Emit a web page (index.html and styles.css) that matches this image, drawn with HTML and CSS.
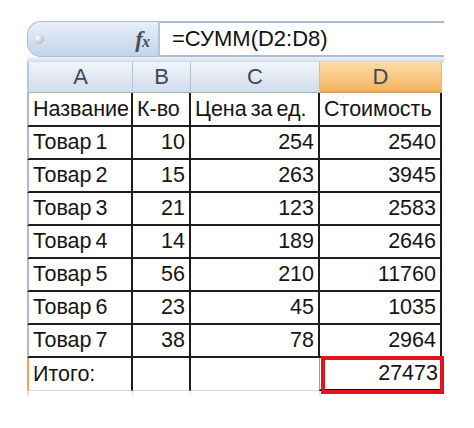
FILE: index.html
```html
<!DOCTYPE html>
<html lang="ru">
<head>
<meta charset="utf-8">
<link rel="stylesheet" href="styles.css">
</head>
<body>
<div class="sheet">
  <div class="fbar">
    <div class="fbar-left">
      <span class="knob"></span>
      <span class="fx">f<i>x</i></span>
    </div>
    <div class="fbar-input">=СУММ(D2:D8)</div>
  </div>
  <div class="strip"></div>
  <div class="grid">
    <div class="hd first">A</div>
    <div class="hd">B</div>
    <div class="hd">C</div>
    <div class="hd sel">D</div>

    <div class="c l first">Название</div><div class="c l">К-во</div><div class="c l">Цена за ед.</div><div class="c l">Стоимость</div>
    <div class="c l first">Товар 1</div><div class="c r">10</div><div class="c r">254</div><div class="c r">2540</div>
    <div class="c l first">Товар 2</div><div class="c r">15</div><div class="c r">263</div><div class="c r">3945</div>
    <div class="c l first">Товар 3</div><div class="c r">21</div><div class="c r">123</div><div class="c r">2583</div>
    <div class="c l first">Товар 4</div><div class="c r">14</div><div class="c r">189</div><div class="c r">2646</div>
    <div class="c l first">Товар 5</div><div class="c r">56</div><div class="c r">210</div><div class="c r">11760</div>
    <div class="c l first">Товар 6</div><div class="c r">23</div><div class="c r">45</div><div class="c r">1035</div>
    <div class="c l first">Товар 7</div><div class="c r">38</div><div class="c r">78</div><div class="c r">2964</div>
    <div class="c l first tot">Итого:</div><div class="c tot-b"></div><div class="c tot-c"></div><div class="c r tot-d"><span>27473</span></div>
  </div>
  <div class="tail">
    <div class="t first"></div><div class="t"></div><div class="t"></div><div class="t"></div>
  </div>
</div>
</body>
</html>
```
FILE: styles.css
```css
html, body {
  margin: 0;
  padding: 0;
  background: #fff;
}
body {
  font-family: "Liberation Sans", Arial, sans-serif;
  color: #151515;
}
.sheet {
  padding: 21px 0 0 27px;
  width: 417px;
}
.fbar {
  display: flex;
  height: 36px;
}
.fbar-left {
  width: 133px;
  box-sizing: border-box;
  display: flex;
  align-items: center;
  justify-content: space-between;
  padding: 0 9px 0 6px;
  border-radius: 14px 0 0 14px;
  background: linear-gradient(#e9f0f8, #d3e0ef 55%, #c3d3e8);
  border: 1px solid #a9bdd6;
  border-right: 2px solid #b3c5dc;
}
.knob {
  width: 10px;
  height: 10px;
  border-radius: 50%;
  background: radial-gradient(circle at 35% 35%, #ffffff, #b9bec6 70%, #9aa2ad);
}
.fx {
  font-family: "Liberation Serif", "Times New Roman", serif;
  font-style: italic;
  font-weight: bold;
  font-size: 23px;
  color: #4b4f57;
  letter-spacing: -1px;
  line-height: 1;
}
.fx i {
  font-size: 16px;
}
.fbar-input {
  flex: 1;
  box-sizing: border-box;
  border-top: 2px solid #a9bcd4;
  border-bottom: 2px solid #a9bcd4;
  padding-left: 12px;
  font-size: 22px;
  line-height: 32px;
  color: #111;
}
.strip {
  height: 5px;
  background: linear-gradient(#eef3f9, #cfdcec);
}
.grid {
  display: grid;
  grid-template-columns: 106px 58px 129px 122px;
  grid-template-rows: 31px 34px repeat(8, 33px);
}
.hd {
  display: flex;
  align-items: center;
  justify-content: center;
  font-size: 22px;
  color: #3c4858;
  background: linear-gradient(#f1f5fb, #dde6f1 60%, #d2deec);
  border-right: 1px solid #b2c1d4;
  border-bottom: 1px solid #9fb2c9;
}
.hd.first {
  border-left: 2px solid #b8c8dc;
}
.hd.sel {
  background: linear-gradient(#fbdca6, #f8c67f 60%, #f3b25f);
  color: #3c4a5a;
  border-bottom: 2px solid #e9a54d;
}
.c {
  box-sizing: border-box;
  display: flex;
  align-items: center;
  font-size: 21.5px;
  padding: 0 4px;
  word-spacing: -2px;
  border-right: 2px solid #1e1e1e;
  border-bottom: 2px solid #1e1e1e;
  white-space: nowrap;
  overflow: hidden;
}
.c.l { justify-content: flex-start; }
.c.r { justify-content: flex-end; }
.c.first {
  border-left: 2px solid #a8bdd8;
}
.c.tot {
  border-left: 2px solid #f0a54a;
  border-bottom: 1px solid #d4dbe5;
}
.tot-b {
  border-right: 2px solid #1e1e1e;
  border-bottom: 1px solid #d4dbe5;
}
.tot-c {
  border-right: 1px solid #d4dbe5;
  border-bottom: 1px solid #d4dbe5;
}
.tot-d {
  position: relative;
  overflow: visible;
  border-right: none;
  border-left: 1px solid #9a9a9a;
  margin-left: -1px;
  border-bottom: 2px solid #111;
}
.tot-d::after {
  content: "";
  position: absolute;
  left: 1px;
  right: -2px;
  top: -2px;
  bottom: -5px;
  border: 4px solid #e1141c;
}
.tail {
  display: grid;
  grid-template-columns: 106px 58px 129px 122px;
  height: 5px;
}
.t {
  border-right: 1px solid #e2e6ec;
}
.t.first {
  border-left: 2px solid #dfe6ef;
}
```
